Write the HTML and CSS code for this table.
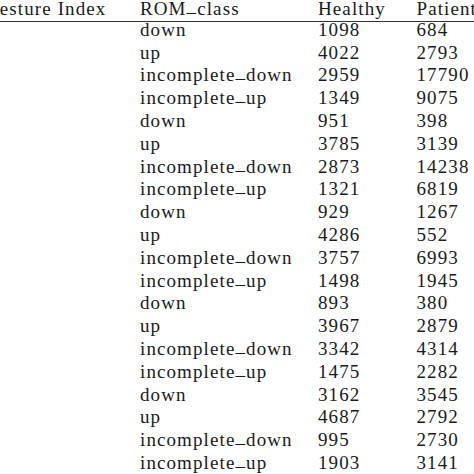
FILE: index.html
```html
<!DOCTYPE html>
<html>
<head>
<meta charset="utf-8">
<link rel="stylesheet" href="styles.css">
</head>
<body>
<div class="table">
  <div class="row head">
    <div class="cell c1"><span class="clip">Gesture Index</span></div>
    <div class="cell">ROM<span class="us">_</span>class</div>
    <div class="cell">Healthy</div>
    <div class="cell">Patients</div>
  </div>
  <div class="row"><div class="cell c1"></div><div class="cell">down</div><div class="cell">1098</div><div class="cell">684</div></div>
  <div class="row"><div class="cell c1"></div><div class="cell">up</div><div class="cell">4022</div><div class="cell">2793</div></div>
  <div class="row"><div class="cell c1"></div><div class="cell">incomplete<span class="us">_</span>down</div><div class="cell">2959</div><div class="cell">17790</div></div>
  <div class="row"><div class="cell c1"></div><div class="cell">incomplete<span class="us">_</span>up</div><div class="cell">1349</div><div class="cell">9075</div></div>
  <div class="row"><div class="cell c1"></div><div class="cell">down</div><div class="cell">951</div><div class="cell">398</div></div>
  <div class="row"><div class="cell c1"></div><div class="cell">up</div><div class="cell">3785</div><div class="cell">3139</div></div>
  <div class="row"><div class="cell c1"></div><div class="cell">incomplete<span class="us">_</span>down</div><div class="cell">2873</div><div class="cell">14238</div></div>
  <div class="row"><div class="cell c1"></div><div class="cell">incomplete<span class="us">_</span>up</div><div class="cell">1321</div><div class="cell">6819</div></div>
  <div class="row"><div class="cell c1"></div><div class="cell">down</div><div class="cell">929</div><div class="cell">1267</div></div>
  <div class="row"><div class="cell c1"></div><div class="cell">up</div><div class="cell">4286</div><div class="cell">552</div></div>
  <div class="row"><div class="cell c1"></div><div class="cell">incomplete<span class="us">_</span>down</div><div class="cell">3757</div><div class="cell">6993</div></div>
  <div class="row"><div class="cell c1"></div><div class="cell">incomplete<span class="us">_</span>up</div><div class="cell">1498</div><div class="cell">1945</div></div>
  <div class="row"><div class="cell c1"></div><div class="cell">down</div><div class="cell">893</div><div class="cell">380</div></div>
  <div class="row"><div class="cell c1"></div><div class="cell">up</div><div class="cell">3967</div><div class="cell">2879</div></div>
  <div class="row"><div class="cell c1"></div><div class="cell">incomplete<span class="us">_</span>down</div><div class="cell">3342</div><div class="cell">4314</div></div>
  <div class="row"><div class="cell c1"></div><div class="cell">incomplete<span class="us">_</span>up</div><div class="cell">1475</div><div class="cell">2282</div></div>
  <div class="row"><div class="cell c1"></div><div class="cell">down</div><div class="cell">3162</div><div class="cell">3545</div></div>
  <div class="row"><div class="cell c1"></div><div class="cell">up</div><div class="cell">4687</div><div class="cell">2792</div></div>
  <div class="row"><div class="cell c1"></div><div class="cell">incomplete<span class="us">_</span>down</div><div class="cell">995</div><div class="cell">2730</div></div>
  <div class="row"><div class="cell c1"></div><div class="cell">incomplete<span class="us">_</span>up</div><div class="cell">1903</div><div class="cell">3141</div></div>
</div>
</body>
</html>
```
FILE: styles.css
```css
html, body {
  margin: 0;
  padding: 0;
  background: #fff;
  overflow: hidden;
}
body {
  width: 474px;
  height: 474px;
}
.table {
  font-family: "Liberation Serif", "Times New Roman", serif;
  font-size: 19px;
  letter-spacing: 1.1px;
  color: #1a1a1a;
  line-height: 22.8px;
}
.row {
  display: grid;
  grid-template-columns: 140px 178px 98.5px 1fr;
  height: 22.8px;
  white-space: nowrap;
}
.head {
  height: 18.2px;
  line-height: 18.2px;
  padding-bottom: 3.3px;
  border-bottom: 1px solid #333;
  margin-bottom: -3.6px;
}
.c1 {
  overflow: hidden;
}
.clip {
  display: inline-block;
  margin-left: -15px;
}
.us {
  vertical-align: 3px;
  line-height: 0;
}
```
